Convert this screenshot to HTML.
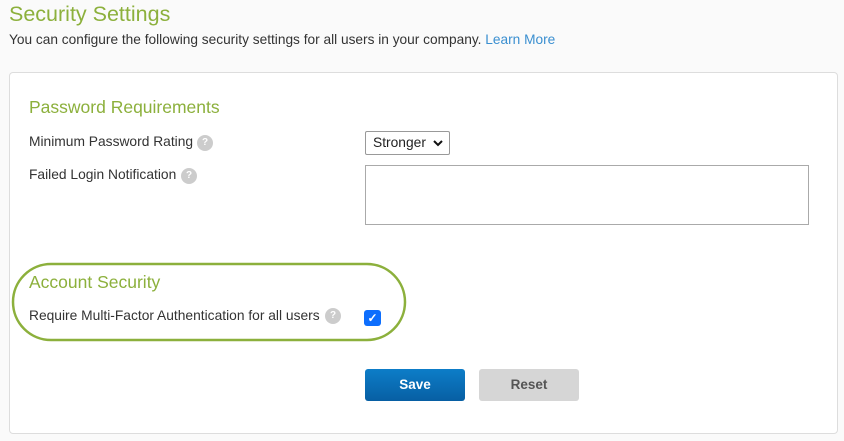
<!DOCTYPE html>
<html><head><meta charset="utf-8"><style>
*{box-sizing:border-box}
body{margin:0;width:844px;height:441px;background:#fafafa;font-family:"Liberation Sans",sans-serif;color:#333;position:relative;overflow:hidden}
.a{position:absolute;white-space:nowrap}
.g{color:#8cb03c}
.q{position:absolute;width:16px;height:16px;border-radius:50%;background:#ccc;color:#fff;font-size:10px;font-weight:bold;text-align:center;line-height:16px}
.lbl{font-size:13.8px;color:#333}
</style></head><body>
<div class="a g" style="left:9px;top:2px;font-size:21.5px;">Security Settings</div>
<div class="a" style="left:9px;top:32px;font-size:13.7px;color:#333">You can configure the following security settings for all users in your company. <span style="color:#3a8fd0">Learn More</span></div>
<div class="a" style="left:9px;top:72px;width:829px;height:362px;background:#fff;border:1px solid #ddd;border-radius:4px"></div>
<div class="a g" style="left:29px;top:97px;font-size:17.5px;">Password Requirements</div>
<div class="a lbl" style="left:29px;top:134px">Minimum Password Rating</div>
<div class="q" style="left:197px;top:135px">?</div>
<div class="a lbl" style="left:29px;top:167px">Failed Login Notification</div>
<div class="q" style="left:181px;top:168px">?</div>
<div class="a" style="left:365px;top:131px;width:85px;height:24px;border:1px solid #999;border-radius:2px;font-size:13.8px;padding:3px 0 0 7px;color:#222">Stronger<svg style="position:absolute;right:6px;top:8px" width="10" height="7"><path d="M1 1L5 5L9 1" fill="none" stroke="#111" stroke-width="2"/></svg></div>
<div class="a" style="left:365px;top:165px;width:444px;height:60px;border:1px solid #aaa"></div>
<div class="a g" style="left:29px;top:272px;font-size:17.5px;">Account Security</div>
<div class="a lbl" style="left:29px;top:308px">Require Multi-Factor Authentication for all users</div>
<div class="q" style="left:325px;top:308px">?</div>
<div class="a" style="left:364px;top:310px;width:17px;height:16px;background:#0d6efd;border-radius:3px;color:#fff;font-size:12px;text-align:center;line-height:16px;font-weight:bold">✓</div>
<svg class="a" style="left:0;top:0" width="844" height="441"><rect x="13" y="264" width="392" height="76" rx="38" ry="38" fill="none" stroke="#8cb03c" stroke-width="2.5"/></svg>
<div class="a" style="left:365px;top:369px;width:100px;height:32px;border-radius:3px;background:linear-gradient(#0d7dc8,#075fa3);color:#fff;font-weight:bold;font-size:13.5px;text-align:center;line-height:32px">Save</div>
<div class="a" style="left:479px;top:369px;width:100px;height:32px;border-radius:3px;background:#d6d6d6;color:#555;font-weight:bold;font-size:13.5px;text-align:center;line-height:32px">Reset</div>
</body></html>
